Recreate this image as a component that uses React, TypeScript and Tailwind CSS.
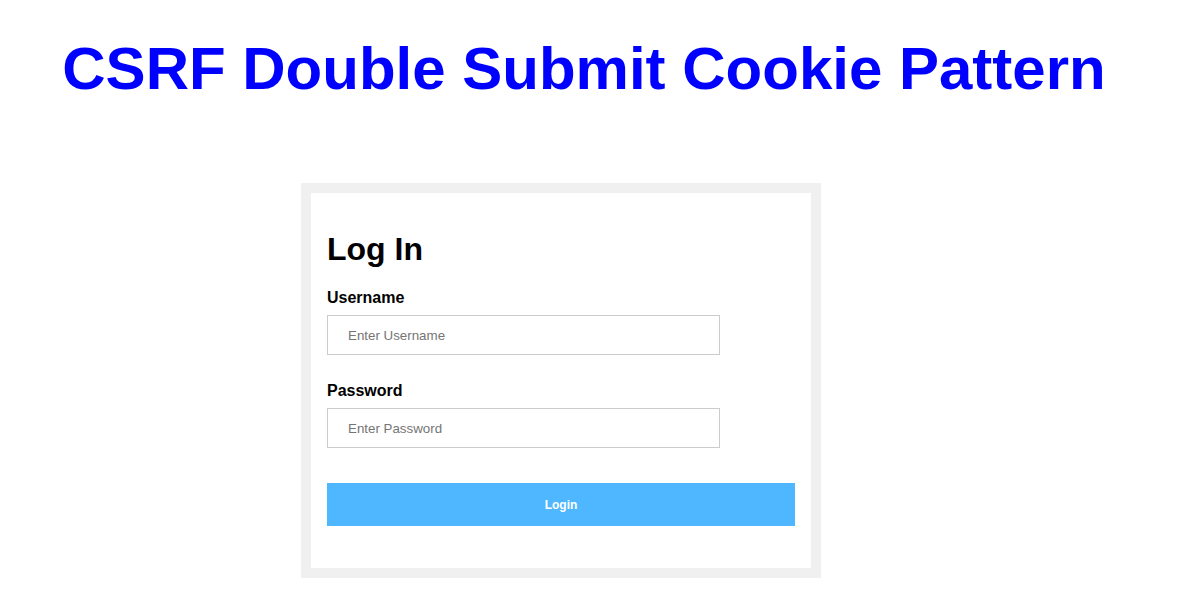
export default function App() {
  return (
    <div className="min-h-[598px] bg-white font-['Liberation_Sans',Arial,sans-serif] text-black">
      {/* Page title */}
      <h1 className="pt-[34px] pr-[10px] text-center text-[60px] leading-[69px] font-bold text-[#0000ff]">
        CSRF Double Submit Cookie Pattern
      </h1>

      {/* Login card */}
      <div className="mt-[80px] ml-[301px] w-[520px] border-[10px] border-[#f0f0f0] bg-white px-4 pt-[38px] pb-[42px]">
        <h2 className="text-[32px] leading-[37px] font-bold">Log In</h2>

        <form className="mt-[21px] flex flex-col" onSubmit={(e) => e.preventDefault()}>
          <label className="text-base leading-[18px] font-bold" htmlFor="username">
            Username
          </label>
          <input
            id="username"
            type="text"
            placeholder="Enter Username"
            className="mt-[8px] h-[40px] w-[393px] border border-[#cccccc] px-5 text-[13.333px] outline-none placeholder:text-[#757575]"
          />

          <label className="mt-[27px] text-base leading-[18px] font-bold" htmlFor="password">
            Password
          </label>
          <input
            id="password"
            type="password"
            placeholder="Enter Password"
            className="mt-[8px] h-[40px] w-[393px] border border-[#cccccc] px-5 text-[13.333px] outline-none placeholder:text-[#757575]"
          />

          <button
            type="submit"
            className="mt-[35px] h-[43px] w-full bg-[#4fb7ff] text-[12px] font-bold text-white"
          >
            Login
          </button>
        </form>
      </div>
    </div>
  )
}
